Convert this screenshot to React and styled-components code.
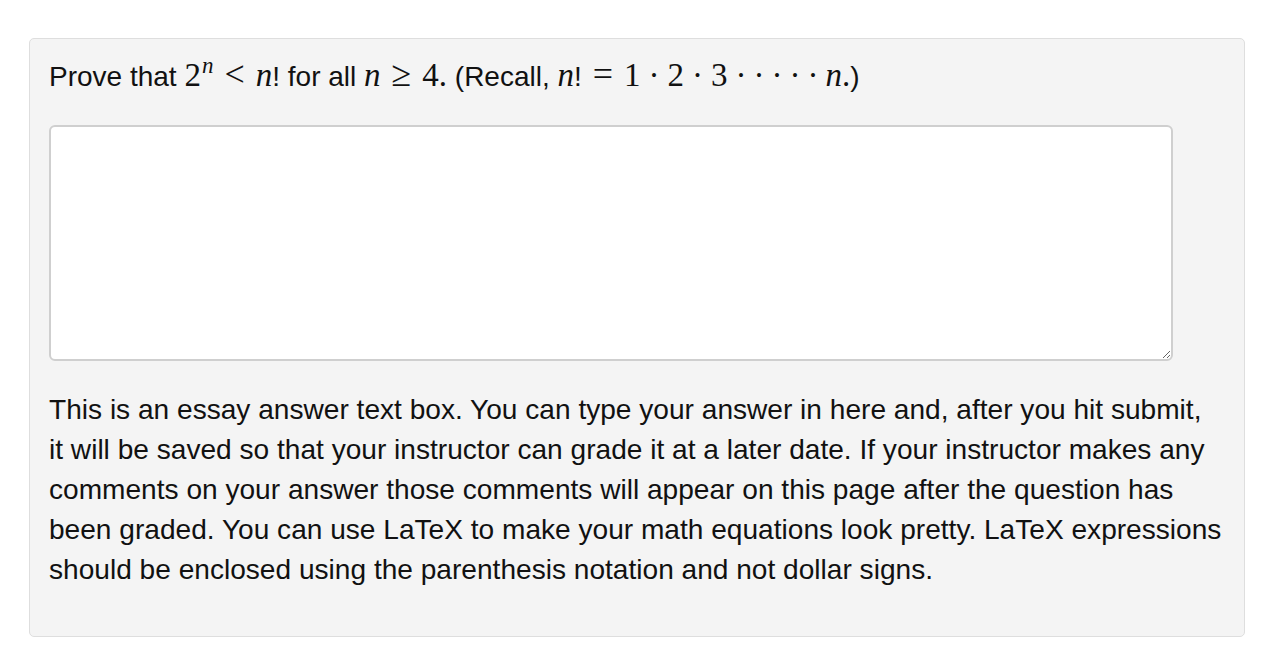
import React from "react";
import styled, { createGlobalStyle } from "styled-components";

const Global = createGlobalStyle`
  html, body { margin: 0; padding: 0; background: #ffffff; }
  body { font-family: "Liberation Sans", Arial, sans-serif; color: #111; }
`;

const Panel = styled.section`
  margin: 38px 33px 0 29px;
  background: #f4f4f4;
  border: 1px solid #dedede;
  border-radius: 5px;
  padding: 18px 19px 46px 19px;
`;

const Question = styled.div`
  font-size: 28px;
  line-height: 40px;
  white-space: nowrap;
`;

const M = styled.span`
  font-family: "Liberation Serif", "DejaVu Serif", serif;
  font-size: 33px;
  line-height: 0;
  font-style: ${(p) => (p.$it ? "italic" : "normal")};
  margin: ${(p) => p.$m || "0"};
`;

const Rel = styled(M)`
  font-size: 36px;
  margin: 0 11px;
`;

const Dot = styled(M)`
  margin: 0 8px;
`;

const Dots = styled(M)`
  margin: 0 0 0 8px;
  letter-spacing: 7px;
`;

const Sup = styled.sup`
  font-family: "Liberation Serif", "DejaVu Serif", serif;
  font-style: italic;
  font-size: 23px;
  vertical-align: 13px;
  line-height: 0;
  margin-left: 1px;
`;

const Answer = styled.textarea`
  display: block;
  box-sizing: border-box;
  width: 1124px;
  height: 236px;
  margin-top: 28px;
  background: #ffffff;
  border: 2px solid #cfcfcf;
  border-radius: 6px;
  font-family: "Liberation Sans", Arial, sans-serif;
  font-size: 20px;
  resize: vertical;
  outline: none;
`;

const Help = styled.p`
  margin: 29px 0 0 0;
  font-size: 28.1px;
  line-height: 40px;
  color: #111;
  white-space: nowrap;
`;

export default function App() {
  return (
    <>
      <Global />
      <Panel>
        <Question>
          Prove that <M>2</M><Sup>n</Sup>
          <Rel>&lt;</Rel>
          <M $it>n</M>! for all <M $it>n</M>
          <Rel>≥</Rel>
          <M>4.</M> (Recall, <M $it>n</M>!
          <Rel>=</Rel>
          <M>1</M>
          <Dot>·</Dot>
          <M>2</M>
          <Dot>·</Dot>
          <M>3</M>
          <Dots>·····</Dots>
          <M $it>n</M>
          <M>.</M>)
        </Question>
        <Answer />
        <Help>
          This is an essay answer text box. You can type your answer in here and, after you hit submit,
          <br />
          it will be saved so that your instructor can grade it at a later date. If your instructor makes any
          <br />
          comments on your answer those comments will appear on this page after the question has
          <br />
          been graded. You can use LaTeX to make your math equations look pretty. LaTeX expressions
          <br />
          should be enclosed using the parenthesis notation and not dollar signs.
        </Help>
      </Panel>
    </>
  );
}
